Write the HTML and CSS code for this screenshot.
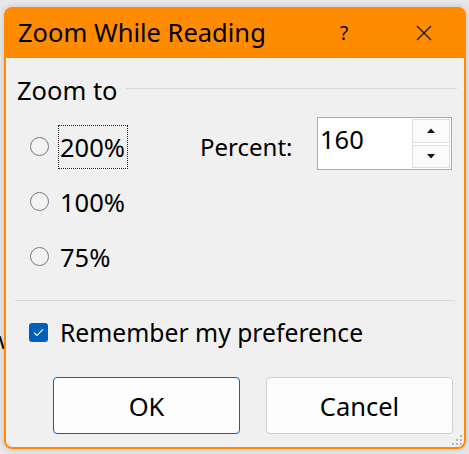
FILE: index.html
```html
<!DOCTYPE html>
<html>
<head>
<meta charset="utf-8">
<link rel="stylesheet" href="styles.css">
</head>
<body>
<span class="behind">w</span>
<div class="window">
  <div class="titlebar">
    <div class="title">Zoom While Reading</div>
    <div class="tb-btn help">?</div>
    <div class="tb-btn close">
      <svg width="16" height="16" viewBox="0 0 16 16"><path d="M1 1 L15 15 M15 1 L1 15" stroke="#1a1a1a" stroke-width="1.3" fill="none"/></svg>
    </div>
  </div>
  <div class="content">
    <div class="group-head"><span>Zoom to</span><div class="rule"></div></div>
    <div class="options">
      <div class="radios">
        <div class="radio-row"><span class="radio"></span><span class="rlabel focus">200%</span></div>
        <div class="radio-row"><span class="radio"></span><span class="rlabel">100%</span></div>
        <div class="radio-row"><span class="radio"></span><span class="rlabel">75%</span></div>
      </div>
      <div class="percent-row">
        <span class="plabel">Percent:</span>
        <div class="spin">
          <span class="spin-value">160</span>
          <div class="spin-btns">
            <div class="spin-btn"><svg width="8" height="5" viewBox="0 0 8 5"><path d="M0 5 L4 0.5 L8 5 Z" fill="#111"/></svg></div>
            <div class="spin-btn"><svg width="8" height="5" viewBox="0 0 8 5"><path d="M0 0 L4 4.5 L8 0 Z" fill="#111"/></svg></div>
          </div>
        </div>
      </div>
    </div>
    <div class="sep"></div>
    <div class="check-row">
      <span class="checkbox"><svg width="11" height="9" viewBox="0 0 11 9"><path d="M1 4.6 L4 7.4 L10 1.4" stroke="#fff" stroke-width="1.1" fill="none"/></svg></span>
      <span class="clabel">Remember my preference</span>
    </div>
    <div class="buttons">
      <div class="btn default">OK</div>
      <div class="btn">Cancel</div>
    </div>
    <svg class="grip" width="12" height="12" viewBox="0 0 12 12">
      <rect x="9" y="1" width="2" height="2" fill="#b5b5b5"/>
      <rect x="5" y="5" width="2" height="2" fill="#b5b5b5"/>
      <rect x="9" y="5" width="2" height="2" fill="#b5b5b5"/>
      <rect x="1" y="9" width="2" height="2" fill="#b5b5b5"/>
      <rect x="5" y="9" width="2" height="2" fill="#b5b5b5"/>
      <rect x="9" y="9" width="2" height="2" fill="#b5b5b5"/>
    </svg>
  </div>
</div>
</body>
</html>
```

FILE: styles.css
```css
* { box-sizing: border-box; }
html, body { margin: 0; padding: 0; }
body {
  width: 469px;
  height: 454px;
  background: #e8e8e8;
  padding: 7px 3px 0 4px;
  font-family: "Segoe UI", "Noto Sans", "Open Sans", sans-serif;
  color: #000;
  position: relative;
  overflow: hidden;
}
.behind {
  position: absolute;
  left: -10px;
  top: 323px;
  font-size: 24px;
  color: #000;
}
.window {
  width: 462px;
  height: 442px;
  border-radius: 8px;
  box-shadow: 0 0 6px rgba(0,0,0,0.18);
  display: flex;
  flex-direction: column;
  position: relative;
}
.titlebar {
  height: 51px;
  background: #ff8c00;
  border-radius: 8px 8px 0 0;
  display: flex;
  align-items: center;
  padding-left: 14px;
}
.title {
  font-size: 25.5px;
  flex: 1;
  padding-bottom: 1px;
  white-space: nowrap;
}
.tb-btn {
  width: 46px;
  display: flex;
  justify-content: center;
  align-items: center;
  height: 51px;
}
.help { font-size: 19px; margin-right: 34px; }
.close { margin-right: 19px; }
.close svg { display: block; }
.content {
  flex: 1;
  background: #f0f0f0;
  border: 2px solid #ff8c00;
  border-top: none;
  border-radius: 0 0 8px 8px;
  position: relative;
  display: flex;
  flex-direction: column;
}
.group-head {
  margin-top: 17px;
  height: 30px;
  display: flex;
  align-items: center;
  padding-left: 11px;
  padding-right: 7px;
  font-size: 25.5px;
}
.rule {
  flex: 1;
  height: 1px;
  background: #dadada;
  margin-left: 8px;
  margin-top: -3px;
}
.options {
  display: flex;
  margin-top: 14px;
}
.radios {
  width: 194px;
  padding-left: 24px;
  display: flex;
  flex-direction: column;
}
.radio-row {
  height: 55px;
  display: flex;
  align-items: center;
}
.radio {
  width: 19px;
  height: 19px;
  border: 1px solid #7a7a7a;
  border-radius: 50%;
  background: #f3f3f3;
  margin-right: 9px;
}
.rlabel {
  font-size: 25.5px;
  line-height: 30px;
  padding: 6px 2px 6px 1px;
  border: 1px dotted transparent;
}
.rlabel.focus { border-color: #222; }
.percent-row {
  height: 55px;
  display: flex;
  align-items: center;
}
.plabel {
  width: 117px;
  font-size: 24px;
}
.spin {
  width: 135px;
  height: 53px;
  border: 1px solid #acacac;
  background: #fff;
  display: flex;
  margin-bottom: 6px;
}
.spin-value {
  flex: 1;
  font-size: 25.5px;
  padding-left: 2px;
  line-height: 42px;
}
.spin-btns {
  width: 38px;
  margin: 1px 1px 1px 0;
  display: flex;
  flex-direction: column;
  gap: 2px;
}
.spin-btn {
  flex: 1;
  background: #fbfbfb;
  border: 1px solid #dedede;
  display: flex;
  align-items: center;
  justify-content: center;
}
.spin-btn svg { display: block; }
.sep {
  height: 1px;
  background: #dadada;
  margin: 16px 9px 0 9px;
}
.check-row {
  margin-top: 16px;
  height: 30px;
  display: flex;
  align-items: center;
  padding-left: 23px;
}
.checkbox {
  width: 19px;
  height: 19px;
  border-radius: 3px;
  background: #005fb8;
  display: flex;
  align-items: center;
  justify-content: center;
  margin-right: 12px;
}
.checkbox svg { display: block; }
.clabel { font-size: 24.7px; white-space: nowrap; }
.buttons {
  margin-top: 30px;
  display: flex;
  gap: 26px;
  padding-left: 47px;
}
.btn {
  width: 187px;
  height: 57px;
  border: 1px solid #d0d0d0;
  border-radius: 4px;
  background: #fdfdfd;
  display: flex;
  align-items: center;
  justify-content: center;
  font-size: 25.5px;
}
.btn.default { border-color: #0067c0; }
.grip {
  position: absolute;
  right: 1px;
  bottom: 1px;
}
```
